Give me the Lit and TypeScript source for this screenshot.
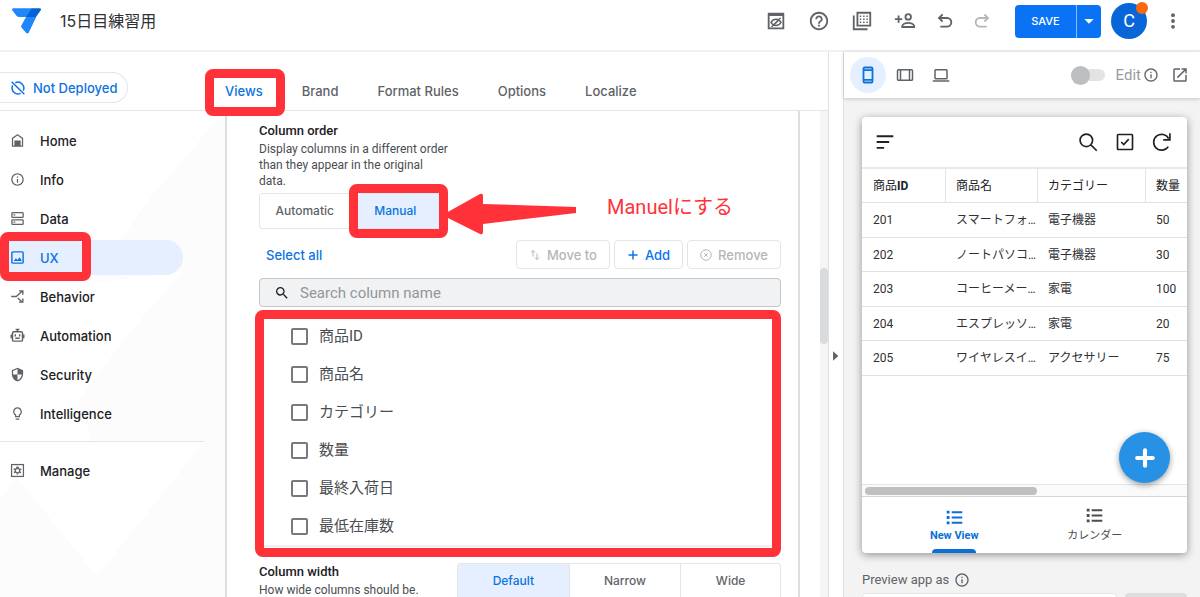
import { LitElement, html, svg, css, nothing, type SVGTemplateResult } from "lit";
import { customElement, property } from "lit/decorators.js";
import { classMap } from "lit/directives/class-map.js";

const stroke = (body: SVGTemplateResult, w = 2) =>
  svg`<g fill="none" stroke="currentColor" stroke-width=${w}>${body}</g>`;

const ICONS: Record<string, SVGTemplateResult> = {
  blocked: stroke(svg`<path d="M8 4.100A9 9 0 0 1 19.900 16M16 20.100A9 9 0 0 1 4.100 8M2.500 2.500l19 19"/>`, 2.2),
  home: svg`<path d="M12 1.500L3 8v14h18V8zm7 18.500h-2v-8H7v8H5V9l7-5 7 5z"/><path d="M8.500 13.500h7V20h-7z"/>`,
  info: svg`<path d="M11 7h2v2h-2zm0 4h2v6h-2zm1-9C6.480 2 2 6.480 2 12s4.480 10 10 10 10-4.480 10-10S17.520 2 12 2zm0 18c-4.410 0-8-3.590-8-8s3.590-8 8-8 8 3.590 8 8-3.590 8-8 8z"/>`,
  data: stroke(svg`<rect x="3" y="2.500" width="18" height="7.500" rx="1"/><rect x="3" y="14" width="18" height="7.500" rx="1"/><path d="M5.500 6.300h3M5.500 17.700h3"/>`),
  image: stroke(svg`<rect x="3" y="3" width="18" height="18" rx="1.500"/><path fill="currentColor" stroke="none" d="M6 17.500l3.500-4.500 2.500 3 3.500-4.500 3.500 6z"/>`, 2.3),
  behavior: stroke(svg`<path d="M2 12h8l9-8M12.500 14.500l6.500 6M14.500 3h6v6M20.500 15v6h-6"/>`, 2.2),
  robot: stroke(svg`<rect x="4" y="6" width="16" height="15" rx="2"/><path d="M8.500 16.500h7M2 10.500v6M22 10.500v6M12 1.500v5M9 2.500h6"/><path d="M8.500 10v3.500M15.500 10v3.500"/>`, 2.3),
  shield: svg`<path d="M12 1L3 5v6c0 5.550 3.840 10.740 9 12 5.160-1.260 9-6.450 9-12V5l-9-4zm0 2.200V12h7c-.530 4.120-3.280 7.790-7 8.940V12H5V6.300z"/>`,
  bulb: svg`<path d="M9 21c0 .550.450 1 1 1h4c.550 0 1-.450 1-1v-1H9v1zm3-19C8.140 2 5 5.140 5 9c0 2.380 1.190 4.470 3 5.740V17c0 .550.450 1 1 1h6c.550 0 1-.450 1-1v-2.260c1.810-1.270 3-3.360 3-5.740 0-3.860-3.140-7-7-7zm2.850 11.100l-.850.600V16h-4v-2.300l-.850-.600A4.997 4.997 0 0 1 7 9c0-2.760 2.240-5 5-5s5 2.240 5 5c0 1.630-.800 3.160-2.150 4.100z"/>`,
  manage: stroke(svg`<rect x="2.500" y="2.500" width="19" height="19"/><circle cx="12" cy="12" r="3.600"/><path stroke-dasharray="2.600 2.640" d="M12 6.500a5.500 5.500 0 1 1 0 11a5.500 5.500 0 1 1 0-11"/>`),
  hidden: stroke(svg`<path d="M4 4h16v16H4z"/><path stroke-width="3" d="M4 5h16"/><path stroke-width="1.500" d="M6.500 13.500c2.500-4.500 8.500-4.500 11 0-2.500 4.500-8.500 4.500-11 0zM7 18.500L17 8.500M10.500 15.500l4-4"/>`),
  help: svg`<path d="M11 18h2v-2h-2v2zm1-16C6.480 2 2 6.480 2 12s4.480 10 10 10 10-4.480 10-10S17.520 2 12 2zm0 18c-4.410 0-8-3.590-8-8s3.590-8 8-8 8 3.590 8 8-3.590 8-8 8zm0-14c-2.210 0-4 1.790-4 4h2c0-1.100.900-2 2-2s2 .900 2 2c0 2-3 1.750-3 5h2c0-2.250 3-2.500 3-5 0-2.210-1.790-4-4-4z"/>`,
  apps: stroke(svg`<path d="M7 3h14v14H7zM3 6v15h15"/><path stroke-dasharray="1.600 2" stroke-width="1.600" d="M9.600 6.800h9M9.600 10h9M9.600 13.300h9"/>`),
  invite: stroke(svg`<path d="M5 6v8M1 10h8"/><circle cx="15.500" cy="7.500" r="3"/><path d="M9 18.500v-1c0-2 3.500-3.500 6.500-3.500s6.500 1.500 6.500 3.500v1z"/>`),
  undo: stroke(svg`<path d="M8.500 2L3 7.500 8.500 13M3.500 7.500H15a6.500 6.500 0 0 1 0 13H5"/>`, 2.8),
  redo: stroke(svg`<path d="M15.500 2L21 7.500 15.500 13M20.500 7.500H9a6.500 6.500 0 0 0 0 13h10"/>`, 2.8),
  more: svg`<circle cx="12" cy="5" r="2.300"/><circle cx="12" cy="12" r="2.300"/><circle cx="12" cy="19" r="2.300"/>`,
  down: svg`<path d="M5 9h14l-7 7z"/>`,
  right: svg`<path d="M7 4v16l9-8z"/>`,
  phone: stroke(svg`<rect x="6" y="2" width="12" height="20" rx="1.500"/><path d="M6 5.500h12M6 18.500h12"/>`, 2.4),
  tablet: stroke(svg`<rect x="2" y="5" width="20" height="14" rx="1.500"/><path d="M6 5v14M18 5v14"/>`),
  laptop: stroke(svg`<rect x="4" y="5" width="16" height="12" rx="1"/><path d="M1 20h22"/>`),
  external: svg`<path d="M19 19H5V5h7V3H5a2 2 0 0 0-2 2v14a2 2 0 0 0 2 2h14c1.100 0 2-.900 2-2v-7h-2v7zM14 3v2h3.590l-9.830 9.830 1.410 1.410L19 6.410V10h2V3h-7z"/>`,
  move: stroke(svg`<path d="M8 15V3M4 7l4-4 4 4M16 9v12M12 17l4 4 4-4"/>`),
  plus: stroke(svg`<path d="M12 3v18M3 12h18"/>`, 3),
  remove: stroke(svg`<circle cx="12" cy="12" r="10.500"/><path d="M8.500 8.500l7 7M15.500 8.500l-7 7"/>`),
  search: svg`<path d="M15.500 14h-.790l-.280-.270A6.471 6.471 0 0 0 16 9.500 6.500 6.500 0 1 0 9.500 16c1.610 0 3.090-.590 4.230-1.570l.270.280v.790l5 4.990L20.490 19l-4.990-5zm-6 0C7.010 14 5 11.990 5 9.500S7.010 5 9.500 5 14 7.010 14 9.500 11.990 14 9.500 14z"/>`,
  find: stroke(svg`<circle cx="10" cy="10" r="7.500"/><path d="M15.500 15.500l7 7"/>`),
  menu: stroke(svg`<path d="M2 5h20M2 12h15M2 19h9"/>`, 2.3),
  check: stroke(svg`<rect x="3" y="3" width="18" height="18" rx="1"/><path d="M7.500 12l3 3 6-6.500"/>`),
  refresh: stroke(svg`<path d="M19.500 17.500A9.500 9.500 0 1 1 20 8M21.500 1.500v8h-8"/>`),
  list: stroke(svg`<path d="M8 4.500h15M8 12h15M8 19.500h15"/><path stroke-width="4" d="M1 4.500h4M1 12h4M1 19.500h4"/>`, 2.8),
  fab: svg`<path stroke="currentColor" stroke-width="4.500" stroke-linecap="round" d="M12 3.500v17M3.500 12h17"/>`,
};

@customElement("ui-icon")
export class UiIcon extends LitElement {
  @property() name = "";
  static styles = css`
    :host { display: inline-flex; flex: none; width: 16px; height: 16px; }
    svg { width: 100%; height: 100%; fill: currentColor; }
  `;
  render() {
    return html`<svg viewBox="0 0 24 24" aria-hidden="true">${ICONS[this.name] ?? nothing}</svg>`;
  }
}

const NAV = [
  ["home", "Home"], ["info", "Info"], ["data", "Data"], ["image", "UX"],
  ["behavior", "Behavior"], ["robot", "Automation"], ["shield", "Security"], ["bulb", "Intelligence"],
];
const TABS = ["Views", "Brand", "Format Rules", "Options", "Localize"];
const COLUMNS = ["商品ID", "商品名", "カテゴリー", "数量", "最終入荷日", "最低在庫数"];
const ROWS = [
  ["201", "スマートフォ…", "電子機器", "50"],
  ["202", "ノートパソコ…", "電子機器", "30"],
  ["203", "コーヒーメー…", "家電", "100"],
  ["204", "エスプレッソ…", "家電", "20"],
  ["205", "ワイヤレスイ…", "アクセサリー", "75"],
];

@customElement("app-root")
export class AppRoot extends LitElement {
  static styles = css`
    :host {
      --blue: #0b73e0;
      --ink: #202124;
      --grey: #5f6368;
      --line: #e4e5e7;
      --tint: #e5efff;
      --mark: #ff3239;
      --sans: Inter, "Noto Sans CJK JP", sans-serif;
      --body: Roboto, "Noto Sans CJK JP", sans-serif;
      display: flex;
      flex-direction: column;
      height: 100vh;
      overflow: hidden;
      background: #fff;
      color: var(--ink);
      font-family: var(--body);
      font-size: 13px;
    }
    * { box-sizing: border-box; }
    button, input { font: inherit; color: inherit; margin: 0; }
    button { background: none; border: 0; padding: 0; cursor: pointer; display: flex; align-items: center; justify-content: center; }
    a { color: inherit; text-decoration: none; }
    h1, h2, p { margin: 0; }

    .top { display: flex; align-items: center; height: 52px; flex: none; padding: 0 17px 8px 12px; border-bottom: 2px solid #f0f0f1; color: var(--grey); }
    .logo { width: 30px; height: 27px; flex: none; }
    .title { flex: 1; padding-left: 18px; font: 400 16px/24px var(--sans); color: #303134; }
    .tools { display: flex; align-items: center; gap: 21px; }
    .tools ui-icon { width: 22px; height: 22px; }
    .tools .step ui-icon { width: 16px; height: 16px; }
    .dim { color: #b4b6b9; }
    .save { display: flex; margin: 0 10px 0 25px; height: 33px; background: #0a73f5; border-radius: 4px; color: #fff; }
    .save-main { width: 61px; font: 500 11px/16px var(--sans); }
    .save-more { width: 25px; border-left: 1px solid #8cbcfa; }
    .save-more ui-icon { width: 16px; height: 16px; }
    .avatar { position: relative; width: 36px; height: 36px; border-radius: 50%; background: #0866d8; color: #fff; font: 18px/36px var(--body); }
    .dot { position: absolute; top: -1px; right: -1px; width: 12px; height: 12px; border-radius: 50%; background: #f9690e; }
    .kebab { margin-left: 16px; }
    .kebab ui-icon { width: 20px; height: 20px; }

    .main { flex: 1; min-height: 0; display: grid; grid-template: minmax(0, 1fr) / minmax(0, 1fr) 15px 356px; }
    .editor { display: grid; grid-template: 59px minmax(0, 1fr) / 227px minmax(0, 1fr); border-right: 1px solid #dfe1e5; }
    .status { display: flex; align-items: center; padding-top: 13px; border-bottom: 1px solid var(--line); }
    .deploy { display: flex; align-items: center; gap: 7px; height: 31px; padding: 0 10px; border: 1px solid var(--line); border-left: 0; border-radius: 0 16px 16px 0; font: 500 13px/20px var(--sans); color: var(--blue); }
    .tabs { display: flex; align-items: center; margin-left: -2px; padding-top: 20px; gap: 39px; border-bottom: 1px solid var(--line); font: 500 13px/20px var(--sans); color: var(--grey); }
    .tab { position: relative; }
    .on { color: var(--blue); }

    .marked::after { content: ""; position: absolute; z-index: 3; pointer-events: none; border: 9px solid var(--mark); border-radius: 8px; }
    .tab.marked::after { inset: -12px -22px -15px -20px; }

    .side { position: relative; border-right: 2px solid #dcddde; padding-top: 12px; background: #fff; }
    .facets { position: absolute; inset: 0; width: 100%; height: 100%; }
    .nav { position: relative; display: flex; flex-direction: column; gap: 4px; font: 500 13px/20px var(--sans); }
    .nav-item { position: relative; display: flex; align-items: center; gap: 15px; height: 35px; margin-right: 42px; padding-left: 10px; border-radius: 0 18px 18px 0; }
    .nav-item ui-icon { width: 15px; height: 15px; color: var(--grey); }
    .nav-item.on { background: var(--tint); }
    .nav-item.on ui-icon { color: inherit; }
    .nav-item.marked::after { inset: -8px 92px -6px 0; }
    .rule { height: 1px; margin: 6px 21px 7px 0; background: var(--line); }

    .content { display: flex; min-width: 0; min-height: 0; }
    .pane { flex: 1; min-width: 0; border-right: 2px solid #dcddde; padding: 11px 17px 0 32px; overflow: hidden; }
    .track { width: 8px; margin-left: 20px; padding-top: 157px; background: #f5f5f6; }
    .thumb { height: 76px; border-radius: 4px; background: #dadbdf; }
    .heading { font: 500 13px/18px var(--body); }
    .hint { max-width: 190px; padding-top: 1px; font-size: 12px; line-height: 16px; color: #4a4d51; }
    .seg { display: flex; font: 500 12px/16px var(--sans); color: var(--grey); border: 1px solid var(--line); border-radius: 3px; }
    .seg button { position: relative; flex: 1; height: 34px; }
    .seg button + button { border-left: 1px solid var(--line); }
    .seg button.on { background: var(--tint); color: var(--blue); }
    .order { position: relative; width: 182px; margin-top: 4px; }
    .seg button.marked::after { inset: -10px -8px -10px -2px; }
    .callout { position: absolute; z-index: 4; left: 185px; top: -1px; display: flex; align-items: flex-start; gap: 31px; white-space: nowrap; color: var(--mark); font: 20px/28px var(--body); }
    .arrow { width: 131px; height: 42px; }
    .bar { display: flex; align-items: center; gap: 4px; margin-top: 11px; font: 500 13px/20px var(--sans); }
    .all { margin: 0 auto 0 7px; color: var(--blue); font-weight: 500; }
    .act { height: 29px; padding: 0 12px; gap: 6px; border: 1px solid var(--line); border-radius: 4px; color: #b4b6b9; }
    .act ui-icon { width: 12px; height: 12px; }
    .act.on { color: #0a73f5; }
    .search { display: flex; align-items: center; height: 29px; margin-top: 9px; padding-left: 14px; gap: 10px; border: 1px solid #c3c5c8; border-radius: 4px; background: #f1f2f4; }
    .search input { flex: 1; min-width: 0; border: 0; padding: 0; outline: 0; background: none; font-size: 15px; }
    .search input::placeholder { color: #93969a; opacity: 1; }
    .list { position: relative; margin: 10px 0 16px; padding: 0 8px 0 32px; border-bottom: 2px solid #f0f0f1; }
    .list.marked::after { inset: -7px 0 -12px -4px; }
    .row { display: flex; align-items: center; gap: 11px; height: 38px; font: 15px/20px var(--body); color: #4a4d51; }
    .row input { appearance: none; width: 17px; height: 17px; border: 2px solid #77797d; border-radius: 2px; }
    .width { display: flex; justify-content: space-between; }
    .width .seg { width: 324px; height: 36px; }
    .width .seg button { flex: 112; }
    .width .seg button:last-child { flex: 100; }

    .gutter { display: flex; flex-direction: column; justify-content: center; align-items: center; padding-top: 62px; border-right: 1px solid #dfe1e5; color: var(--grey); }
    .gutter ui-icon { width: 14px; height: 14px; }
    .preview { display: flex; flex-direction: column; min-width: 0; background: #f3f3f4; }
    .devices { display: flex; align-items: center; gap: 18px; height: 46px; flex: none; padding: 0 11px 0 6px; background: #fff; box-shadow: 0 1px 4px #0003; color: var(--grey); z-index: 1; }
    .devices ui-icon { width: 18px; height: 18px; }
    .device.on { width: 36px; height: 36px; margin-right: -8px; border-radius: 50%; background: var(--tint); }
    .edit { display: flex; align-items: center; gap: 11px; margin-left: auto; margin-right: -16px; font: 15px/20px var(--body); color: #999b9e; }
    .edit input { appearance: none; width: 34px; height: 12px; border-radius: 6px; background: #e3e3e3; display: flex; align-items: center; }
    .edit input::before { content: ""; width: 19px; height: 19px; flex: none; border-radius: 50%; background: #bcbec0; }
    .info { margin-right: -6px; }
    .info ui-icon { width: 16px; height: 16px; }
    .phone { position: relative; flex: 1; min-height: 0; margin: 19px 13px 0 18px; display: flex; flex-direction: column; background: #fff; border-radius: 4px; box-shadow: 0 2px 8px #0006; overflow: hidden; }
    .app-bar { display: flex; align-items: center; gap: 17px; height: 50px; flex: none; padding: 0 15px 0 13px; }
    .app-bar ui-icon { width: 20px; height: 20px; }
    .app-bar button:first-child { margin-right: auto; }
    .sheet { flex: 1; min-height: 0; overflow: hidden; }
    table { table-layout: fixed; width: 375px; border-collapse: separate; border-spacing: 0; font: 12px/16px var(--body); }
    .c-id { width: 83px; } .c-name { width: 92px; } .c-cat { width: 108px; } .c-qty { width: 92px; }
    th { height: 36px; padding: 0 0 0 11px; text-align: left; font-weight: 400; border-top: 2px solid #e8e9eb; border-bottom: 1px solid #dfe1e5; }
    th + th { border-left: 1px solid var(--line); padding-left: 10px; }
    td { height: 35px; padding: 0 0 0 11px; white-space: nowrap; border-bottom: 1px solid #dfe1e5; color: #303134; }
    tr:nth-child(even) td { height: 34px; }
    .fab { position: absolute; right: 17px; bottom: 70px; width: 51px; height: 51px; border-radius: 50%; background: #2792e5; color: #fff; box-shadow: 0 2px 6px #0006; }
    .fab ui-icon { width: 22px; height: 22px; }
    .hscroll { height: 13px; flex: none; padding: 3px; border-top: 1px solid var(--line); border-bottom: 1px solid #d5d6d8; background: #fafafa; }
    .hthumb { width: 54%; height: 8px; margin-top: -1px; border-radius: 4px; background: #bfc1c1; }
    .dock { display: flex; height: 56px; flex: none; padding: 0 22px; }
    .dock a { position: relative; flex: 1; display: flex; flex-direction: column; align-items: center; padding-top: 10px; gap: 3px; font: 11px/18px var(--body); color: #4a4d51; }
    .dock a.on { padding-top: 12px; gap: 1px; font-weight: 700; color: #0b6fd6; }
    .dock ui-icon { width: 17px; height: 17px; }
    .dock a.on::after { content: ""; position: absolute; bottom: 0; width: 44px; height: 4px; border-radius: 4px 4px 0 0; background: currentColor; }
    .as { height: 44px; flex: none; padding: 18px 13px 0 18px; overflow: hidden; }
    .as-label { display: flex; align-items: center; gap: 5px; font: 13px/18px var(--body); color: var(--grey); }
    .as-label ui-icon { width: 16px; height: 16px; }
    .as-row { display: flex; gap: 8px; margin-top: 4px; }
    .as-row input { flex: 1; min-width: 0; height: 32px; border: 1px solid var(--line); border-radius: 4px; background: #fff; }
    .as-row button { width: 62px; height: 32px; border-radius: 4px; background: #dedede; }
  `;

  private top() {
    return html`<header class="top">
      <svg class="logo" viewBox="0 0 30 27" aria-hidden="true">
        <path fill="#1f87fc" d="M1.500 .300H20L14.500 9H7Q5.500 9 4.700 8L.300 2.200Q-.500 .300 1.500 .300z"/>
        <path fill="#0561d6" d="M19.700 .300H27.500q2.200 .200 1.200 2L24 9H14z"/>
        <path fill="#1f87fc" d="M14 9h10.200l-7.400 15.500q-1.300 2-3 0L9.500 19.500q-.700-1-.200-2z"/>
      </svg>
      <h1 class="title">15日目練習用</h1>
      <div class="tools">
        <button aria-label="Hidden"><ui-icon name="hidden"></ui-icon></button>
        <button aria-label="Help"><ui-icon name="help"></ui-icon></button>
        <button aria-label="Apps"><ui-icon name="apps"></ui-icon></button>
        <button aria-label="Share"><ui-icon name="invite"></ui-icon></button>
        <button class="step" aria-label="Undo"><ui-icon name="undo"></ui-icon></button>
        <button class="step dim" aria-label="Redo"><ui-icon name="redo"></ui-icon></button>
      </div>
      <div class="save">
        <button class="save-main">SAVE</button>
        <button class="save-more" aria-label="Save options"><ui-icon name="down"></ui-icon></button>
      </div>
      <button class="avatar">C<span class="dot"></span></button>
      <button class="kebab" aria-label="More"><ui-icon name="more"></ui-icon></button>
    </header>`;
  }

  private side() {
    return html`<aside class="side">
      <svg class="facets" viewBox="0 0 225 486" preserveAspectRatio="none" aria-hidden="true">
        <path fill="#fcfcfd" d="M225 0v486H0v-98l17-21 80 98L204 331H93L78 290l52-69-40-49 60-85z"/>
        <path fill="#fff" d="M90 172l40 49 52-60z"/>
      </svg>
      <nav class="nav">
        ${NAV.map(([icon, label]) => html`<a href="#" class="nav-item ${classMap({ on: label === "UX", marked: label === "UX" })}"><ui-icon name=${icon}></ui-icon>${label}</a>`)}
        <div class="rule"></div>
        <a href="#" class="nav-item"><ui-icon name="manage"></ui-icon>Manage</a>
      </nav>
    </aside>`;
  }

  private pane() {
    return html`<div class="content">
      <section class="pane">
        <h2 class="heading">Column order</h2>
        <p class="hint">Display columns in a different order than they appear in the original data.</p>
        <div class="seg order">
          <button>Automatic</button>
          <button class="on marked">Manual</button>
          <div class="callout">
            <svg class="arrow" viewBox="0 0 131 42" aria-hidden="true">
              <path fill="#ff3239" d="M1 20L35 1q3-1 3 2v8l93 3v6l-93 11v8q0 3-3 2L1 24q-2-2 0-4z"/>
            </svg>
            <span>Manuelにする</span>
          </div>
        </div>
        <div class="bar">
          <button class="all">Select all</button>
          <button class="act"><ui-icon name="move"></ui-icon>Move to</button>
          <button class="act on"><ui-icon name="plus"></ui-icon>Add</button>
          <button class="act"><ui-icon name="remove"></ui-icon>Remove</button>
        </div>
        <label class="search"><ui-icon name="search"></ui-icon><input type="text" aria-label="Search column name" placeholder="Search column name"></label>
        <div class="list marked">
          ${COLUMNS.map((c) => html`<label class="row"><input type="checkbox">${c}</label>`)}
        </div>
        <div class="width">
          <div>
            <h2 class="heading">Column width</h2>
            <p class="hint">How wide columns should be.</p>
          </div>
          <div class="seg"><button class="on">Default</button><button>Narrow</button><button>Wide</button></div>
        </div>
      </section>
      <div class="track"><div class="thumb"></div></div>
    </div>`;
  }

  private preview() {
    return html`<aside class="preview">
      <div class="devices">
        <button class="device on" aria-label="Phone"><ui-icon name="phone"></ui-icon></button>
        <button class="device" aria-label="Tablet"><ui-icon name="tablet"></ui-icon></button>
        <button class="device" aria-label="Desktop"><ui-icon name="laptop"></ui-icon></button>
        <label class="edit"><input type="checkbox">Edit</label>
        <button class="info" aria-label="About editing"><ui-icon name="info"></ui-icon></button>
        <button aria-label="Open in new window"><ui-icon name="external"></ui-icon></button>
      </div>
      <div class="phone">
        <div class="app-bar">
          <button aria-label="Menu"><ui-icon name="menu"></ui-icon></button>
          <button aria-label="Search"><ui-icon name="find"></ui-icon></button>
          <button aria-label="Select"><ui-icon name="check"></ui-icon></button>
          <button aria-label="Sync"><ui-icon name="refresh"></ui-icon></button>
        </div>
        <div class="sheet">
          <table>
            <thead><tr><th class="c-id">商品<b>ID</b></th><th class="c-name">商品名</th><th class="c-cat">カテゴリー</th><th class="c-qty">数量</th></tr></thead>
            <tbody>${ROWS.map((r) => html`<tr>${r.map((c) => html`<td>${c}</td>`)}</tr>`)}</tbody>
          </table>
        </div>
        <div class="hscroll"><div class="hthumb"></div></div>
        <nav class="dock">
          <a href="#" class="on"><ui-icon name="list"></ui-icon>New View</a>
          <a href="#"><ui-icon name="list"></ui-icon>カレンダー</a>
        </nav>
        <button class="fab" aria-label="Add"><ui-icon name="fab"></ui-icon></button>
      </div>
      <div class="as">
        <label class="as-label" for="as">Preview app as <ui-icon name="info"></ui-icon></label>
        <div class="as-row"><input id="as" type="text"><button aria-label="Apply"></button></div>
      </div>
    </aside>`;
  }

  render() {
    return html`${this.top()}
      <div class="main">
        <div class="editor">
          <div class="status"><button class="deploy"><ui-icon name="blocked"></ui-icon>Not Deployed</button></div>
          <nav class="tabs">${TABS.map((t, i) => html`<a href="#" class="tab ${classMap({ on: i === 0, marked: i === 0 })}">${t}</a>`)}</nav>
          ${this.side()} ${this.pane()}
        </div>
        <div class="gutter"><ui-icon name="right"></ui-icon></div>
        ${this.preview()}
      </div>`;
  }
}
